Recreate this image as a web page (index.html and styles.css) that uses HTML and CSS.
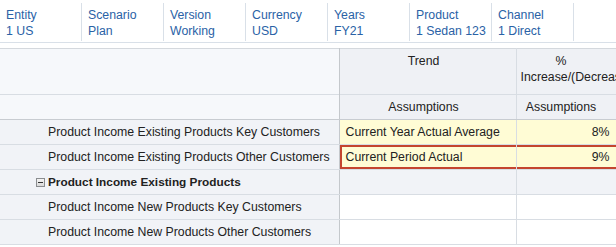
FILE: index.html
```html
<!DOCTYPE html>
<html lang="en">
<head>
  <meta charset="UTF-8">
  <title>Assumptions Grid</title>
  <link rel="stylesheet" href="styles.css">
</head>
<body>
  <div class="pov">
    <div class="pov-item"><div>Entity</div><div>1 US</div></div>
    <div class="pov-item"><div>Scenario</div><div>Plan</div></div>
    <div class="pov-item"><div>Version</div><div>Working</div></div>
    <div class="pov-item"><div>Currency</div><div>USD</div></div>
    <div class="pov-item"><div>Years</div><div>FY21</div></div>
    <div class="pov-item"><div>Product</div><div>1 Sedan 123</div></div>
    <div class="pov-item"><div>Channel</div><div>1 Direct</div></div>
  </div>

  <div class="grid-wrap">
    <table class="grid">
      <colgroup>
        <col class="c-row">
        <col class="c-trend">
        <col class="c-pct">
      </colgroup>
      <tr class="head1">
        <td class="corner"></td>
        <td class="colhead">Trend</td>
        <td class="colhead">%<br>Increase/(Decrease)</td>
      </tr>
      <tr class="head2">
        <td class="corner"></td>
        <td class="colhead mid">Assumptions</td>
        <td class="colhead mid">Assumptions</td>
      </tr>
      <tr>
        <td class="rowhead">Product Income Existing Products Key Customers</td>
        <td class="cell input">Current Year Actual Average</td>
        <td class="cell input num">8%</td>
      </tr>
      <tr class="selected">
        <td class="rowhead">Product Income Existing Products Other Customers</td>
        <td class="cell input">Current Period Actual</td>
        <td class="cell input num">9%</td>
      </tr>
      <tr>
        <td class="rowhead parent"><span class="toggle"></span>Product Income Existing Products</td>
        <td class="cell calc"></td>
        <td class="cell calc"></td>
      </tr>
      <tr>
        <td class="rowhead">Product Income New Products Key Customers</td>
        <td class="cell"></td>
        <td class="cell"></td>
      </tr>
      <tr>
        <td class="rowhead">Product Income New Products Other Customers</td>
        <td class="cell"></td>
        <td class="cell"></td>
      </tr>
    </table>
  </div>
</body>
</html>
```

FILE: styles.css
```css
body {
  margin: 0;
  font-family: "Liberation Sans", Arial, sans-serif;
  font-size: 12.3px;
  color: #222;
  background: #fff;
}

/* point of view bar */
.pov {
  display: flex;
  height: 42px;
  border-bottom: 1px solid #d9e0e8;
}

.pov-item {
  width: 82px;
  height: 38px;
  margin-top: 3px;
  padding: 4px 0 0 6px;
  box-sizing: border-box;
  border-right: 1px solid #d9e0e8;
  color: #2a62a6;
  line-height: 16px;
  white-space: nowrap;
}

/* grid */
.grid-wrap {
  margin-top: 5px;
  width: 616px;
  overflow: hidden;
}

.grid {
  border-collapse: collapse;
  table-layout: fixed;
  width: 640px;
}

.c-row { width: 339px; }
.c-trend { width: 177px; }
.c-pct { width: 124px; }

.grid td {
  border: 1px solid #d8dde3;
  padding: 0;
  height: 24px;
  white-space: nowrap;
  overflow: hidden;
}

.grid tr:first-child td {
  border-top: 1px solid #d4d8dd;
}

.grid .head1 td {
  height: 41px;
  vertical-align: top;
}

.corner {
  background: #f6f8fb;
  border-left: none !important;
}

.head1 .corner {
  border-bottom: none !important;
}

.colhead {
  background: #eff1f5;
  text-align: center;
  padding: 4px 38px 0 4px !important;
  line-height: 16px;
}

.colhead:nth-child(2) {
  padding-right: 12px !important;
}

.colhead.mid {
  vertical-align: middle;
  padding-top: 0 !important;
}

.head2 td {
  border-bottom-color: #c8ccd1;
}

.grid td.rowhead {
  background: #f1f3f7;
  padding-left: 48px;
  border-left: none;
  border-right-color: #c4c8cc;
}

.head1 td:first-child,
.head2 td:first-child {
  border-right-color: #c4c8cc;
}

.grid td.rowhead.parent {
  font-weight: bold;
  font-size: 11.8px;
  padding-left: 36px;
}

.toggle {
  display: inline-block;
  width: 7px;
  height: 7px;
  border: 1px solid #8a8d90;
  background: linear-gradient(#f4f4f4, #d9d9d9);
  margin-right: 3px;
  vertical-align: -1px;
  position: relative;
}

.toggle::after {
  content: "";
  position: absolute;
  left: 1px;
  right: 1px;
  top: 3px;
  height: 1px;
  background: #333;
}

.cell {
  background: #fff;
  padding: 0 6px !important;
}

.cell.input {
  background: #fffcd5;
}

.cell.calc {
  background: #f1f3f7;
}

.cell.num {
  text-align: right;
  padding-right: 30px !important;
}

.selected .cell {
  box-shadow: inset 0 2px 0 #c4452f, inset 0 -2px 0 #c4452f;
}

.selected .cell:nth-child(2) {
  box-shadow: inset 2px 2px 0 #c4452f, inset 0 -2px 0 #c4452f;
}

.selected .cell:last-child {
  box-shadow: inset -2px 2px 0 #c4452f, inset 0 -2px 0 #c4452f;
}
```
